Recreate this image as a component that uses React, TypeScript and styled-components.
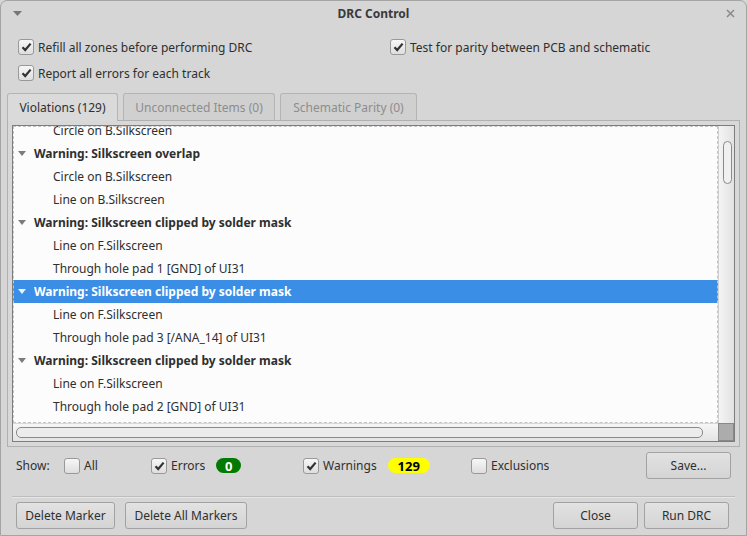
import React, { FC } from 'react';
import styled, { createGlobalStyle } from 'styled-components';

const GlobalStyle = createGlobalStyle`
  html, body { margin: 0; padding: 0; background: #d6d6d6; }
  body {
    font-family: "Noto Sans", "DejaVu Sans", sans-serif;
    font-size: 12px;
    color: #2f2f2f;
  }
`;

const Window = styled.div`
  width: 747px;
  height: 536px;
  box-sizing: border-box;
  border: 1px solid #a4a4a4;
  border-radius: 7px 7px 0 0;
  background: #d6d6d6;
  display: flex;
  flex-direction: column;
  overflow: hidden;
`;

const TitleBar = styled.div`
  height: 25px;
  display: flex;
  align-items: center;
  justify-content: space-between;
  padding: 0 10px 1px 10px;
`;

const Title = styled.div`
  font-weight: bold;
  color: #3a3a3a;
`;

const TitleIcon = styled.div`
  width: 12px;
  display: flex;
  justify-content: center;
  color: #7a7a7a;
`;

const Options = styled.div`
  display: grid;
  grid-template-columns: 372px 1fr;
  grid-auto-rows: 26px;
  padding: 7px 0 0 17px;
`;

const Check = styled.label`
  display: flex;
  align-items: center;
  gap: 4px;
  white-space: nowrap;
`;

const Box = styled.span`
  width: 14px;
  height: 14px;
  border: 1px solid #999;
  border-radius: 3px;
  background: linear-gradient(#f7f7f7, #dedede);
  display: flex;
  align-items: center;
  justify-content: center;
  flex: none;
`;

const CheckBox: FC<{ checked?: boolean; label: string }> = ({ checked, label }) => (
  <Check>
    <Box>
      {checked && (
        <svg width="11" height="10" viewBox="0 0 11 10">
          <path d="M1.5 5.2 L4.2 8 L9.6 1.6" fill="none" stroke="#333" strokeWidth="2.2" />
        </svg>
      )}
    </Box>
    {label}
  </Check>
);

const TabBar = styled.div`
  display: flex;
  gap: 5px;
  padding: 7px 0 0 6px;
  height: 27px;
`;

const Tab = styled.div<{ $w: number; $active?: boolean }>`
  width: ${(p) => p.$w}px;
  box-sizing: border-box;
  border: 1px solid #b4b4b4;
  border-bottom: none;
  border-radius: 3px 3px 0 0;
  background: ${(p) => (p.$active ? '#dadada' : '#d0d0d0')};
  color: ${(p) => (p.$active ? '#2f2f2f' : '#8d8d8d')};
  display: flex;
  align-items: center;
  justify-content: center;
  margin-bottom: ${(p) => (p.$active ? '-1px' : '0')};
  position: relative;
`;

const Page = styled.div`
  margin: 0 6px 0 6px;
  height: 327px;
  box-sizing: border-box;
  border: 1px solid #b0b0b0;
  background: #d8d8d8;
  padding: 4px;
`;

const ListBox = styled.div`
  height: 100%;
  box-sizing: border-box;
  border: 1px solid #7d7d7d;
  display: grid;
  grid-template-columns: 1fr 16px;
  grid-template-rows: 1fr 18px;
  background: #fcfcfc;
`;

const Viewport = styled.div`
  position: relative;
  overflow: hidden;
  &::after {
    content: '';
    position: absolute;
    inset: 0 0 0 0;
    border: 1px dashed #c4c4c4;
    pointer-events: none;
  }
`;

const Rows = styled.div`
  margin-top: -7px;
`;

const Row = styled.div<{ $header?: boolean; $selected?: boolean }>`
  height: 23px;
  display: flex;
  align-items: center;
  padding-left: ${(p) => (p.$header ? '5px' : '40px')};
  font-weight: ${(p) => (p.$header ? 'bold' : 'normal')};
  background: ${(p) => (p.$selected ? '#3a8ee6' : 'transparent')};
  color: ${(p) => (p.$selected ? '#ffffff' : '#2f2f2f')};
  white-space: nowrap;
`;

const Arrow = styled.span<{ $selected?: boolean }>`
  width: 0;
  height: 0;
  border-left: 4.5px solid transparent;
  border-right: 4.5px solid transparent;
  border-top: 5px solid ${(p) => (p.$selected ? '#e8f1fc' : '#7c7c7c')};
  margin-right: 8px;
`;

const VScroll = styled.div`
  background: linear-gradient(90deg, #f4f4f4, #e2e2e2);
  border-left: 1px solid #d0d0d0;
  padding: 15px 0 0 4px;
`;

const VThumb = styled.div`
  width: 7px;
  height: 41px;
  border: 1px solid #8a8a8a;
  border-radius: 5px;
  background: #f0f0f0;
`;

const HScroll = styled.div`
  background: linear-gradient(#f6f6f6, #e4e4e4);
  border-top: 1px solid #d8d8d8;
  padding: 3px 0 0 3px;
`;

const HThumb = styled.div`
  width: 685px;
  height: 9px;
  border: 1px solid #8a8a8a;
  border-radius: 5px;
  background: #ececec;
`;

const Corner = styled.div`
  background: #acacac;
  border: 1px solid #888;
`;

const ShowRow = styled.div`
  margin-top: 5px;
  height: 27px;
  display: grid;
  grid-template-columns: 48px 87px 152px 168px 1fr 85px;
  align-items: center;
  padding: 0 15px 0 15px;
`;

const Group = styled.div`
  display: flex;
  align-items: center;
  gap: 4px;
`;

const Badge = styled.span<{ $bg: string; $fg: string; $w: number }>`
  width: ${(p) => p.$w}px;
  height: 15px;
  border-radius: 8px;
  background: ${(p) => p.$bg};
  color: ${(p) => p.$fg};
  font-weight: bold;
  font-size: 13px;
  display: flex;
  align-items: center;
  justify-content: center;
  margin-left: 7px;
`;

const Separator = styled.div`
  margin: 17px 11px 0 11px;
  height: 1px;
  background: #bdbdbd;
  border-bottom: 1px solid #e6e6e6;
`;

const ButtonBar = styled.div`
  display: flex;
  gap: 10px;
  padding: 4px 17px 0 15px;
`;

const RightButtons = styled.div`
  margin-left: auto;
  display: flex;
  gap: 6px;
`;

const Button = styled.button<{ $w: number }>`
  width: ${(p) => p.$w}px;
  height: 27px;
  border: 1px solid #a2a2a2;
  border-radius: 3px;
  background: linear-gradient(#e2e2e2, #d4d4d4);
  font-family: inherit;
  font-size: 12px;
  color: #2f2f2f;
  padding: 0;
`;

type Item = { header?: boolean; text: string; selected?: boolean };

const items: Item[] = [
  { text: 'Circle on B.Silkscreen' },
  { header: true, text: 'Warning: Silkscreen overlap' },
  { text: 'Circle on B.Silkscreen' },
  { text: 'Line on B.Silkscreen' },
  { header: true, text: 'Warning: Silkscreen clipped by solder mask' },
  { text: 'Line on F.Silkscreen' },
  { text: 'Through hole pad 1 [GND] of UI31' },
  { header: true, text: 'Warning: Silkscreen clipped by solder mask', selected: true },
  { text: 'Line on F.Silkscreen' },
  { text: 'Through hole pad 3 [/ANA_14] of UI31' },
  { header: true, text: 'Warning: Silkscreen clipped by solder mask' },
  { text: 'Line on F.Silkscreen' },
  { text: 'Through hole pad 2 [GND] of UI31' },
];

const App: FC = () => {
  return (
    <>
      <GlobalStyle />
      <Window>
        <TitleBar>
          <TitleIcon>
            <svg width="9" height="5" viewBox="0 0 9 5">
              <path d="M0 0 H9 L4.5 5 Z" fill="#777" />
            </svg>
          </TitleIcon>
          <Title>DRC Control</Title>
          <TitleIcon>
            <svg width="9" height="9" viewBox="0 0 9 9">
              <path d="M1 1 L8 8 M8 1 L1 8" stroke="#8a8a8a" strokeWidth="1.5" />
            </svg>
          </TitleIcon>
        </TitleBar>

        <Options>
          <CheckBox checked label="Refill all zones before performing DRC" />
          <CheckBox checked label="Test for parity between PCB and schematic" />
          <CheckBox checked label="Report all errors for each track" />
        </Options>

        <TabBar>
          <Tab $w={111} $active>Violations (129)</Tab>
          <Tab $w={152}>Unconnected Items (0)</Tab>
          <Tab $w={137}>Schematic Parity (0)</Tab>
        </TabBar>

        <Page>
          <ListBox>
            <Viewport>
              <Rows>
                {items.map((it, i) => (
                  <Row key={i} $header={it.header} $selected={it.selected}>
                    {it.header && <Arrow $selected={it.selected} />}
                    {it.text}
                  </Row>
                ))}
              </Rows>
            </Viewport>
            <VScroll>
              <VThumb />
            </VScroll>
            <HScroll>
              <HThumb />
            </HScroll>
            <Corner />
          </ListBox>
        </Page>

        <ShowRow>
          <span>Show:</span>
          <CheckBox label="All" />
          <Group>
            <CheckBox checked label="Errors" />
            <Badge $bg="#007a00" $fg="#ffffff" $w={25}>0</Badge>
          </Group>
          <Group>
            <CheckBox checked label="Warnings" />
            <Badge $bg="#ffff00" $fg="#000000" $w={42}>129</Badge>
          </Group>
          <CheckBox label="Exclusions" />
          <Button $w={85}>Save...</Button>
        </ShowRow>

        <Separator />

        <ButtonBar>
          <Button $w={99}>Delete Marker</Button>
          <Button $w={122}>Delete All Markers</Button>
          <RightButtons>
            <Button $w={85}>Close</Button>
            <Button $w={85}>Run DRC</Button>
          </RightButtons>
        </ButtonBar>
      </Window>
    </>
  );
};

export default App;
